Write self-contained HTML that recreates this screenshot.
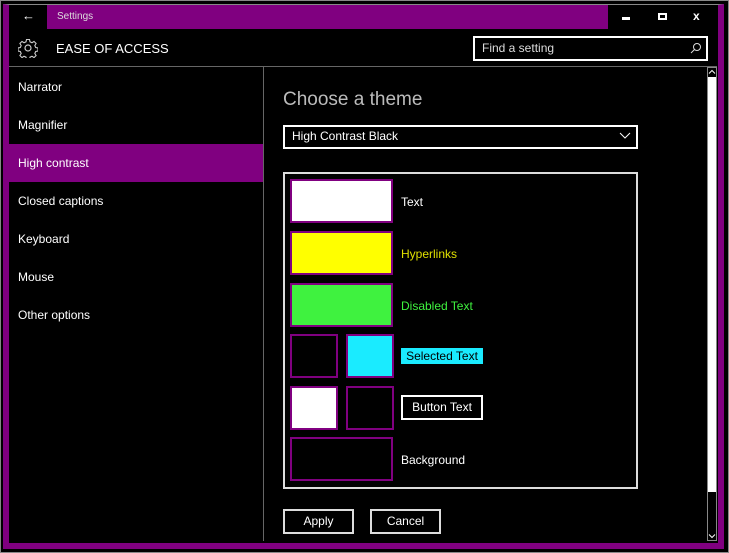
<!DOCTYPE html><html><head><style>
*{margin:0;padding:0;box-sizing:border-box}
body{width:729px;height:553px;background:#000;position:relative;overflow:hidden;font-family:"Liberation Sans",sans-serif;color:#fff;font-size:12px}
.a{position:absolute}
.sw{position:absolute;border:2px solid #800080;left:290px;width:103px;height:44px}
.lbl{position:absolute;left:401px;font-size:12px}
.nav{position:absolute;left:18px;font-size:12px}
</style></head><body>
<div class="a" style="left:0;top:0;width:729px;height:553px;border:1px solid #888"></div>
<div class="a" style="left:3px;top:4px;width:721px;height:545px;border:6px solid #800080;border-top:1px solid #888"></div>
<div class="a" style="left:47px;top:5px;width:561px;height:24px;background:#800080"></div>
<div class="a" style="left:57px;top:11px;font-size:10px;color:#ddd">Settings</div>
<div class="a" style="left:22px;top:8px;font-size:13px">&#8592;</div>
<div class="a" style="left:622px;top:17px;width:8px;height:3px;background:#fff"></div>
<div class="a" style="left:658px;top:13px;width:9px;height:7px;border:2px solid #fff"></div>
<div class="a" style="left:693px;top:9px;font-size:12px;font-weight:bold">x</div>
<svg class="a" style="left:18px;top:38px" width="20" height="20" viewBox="0 0 20 20"><circle cx="10" cy="10" r="3" fill="none" stroke="#ccc" stroke-width="1.2"/><path d="M8.5 1.5h3l.5 2.3 2 .9 2-1.3 2.1 2.1-1.3 2 .9 2 2.3.5v3l-2.3.5-.9 2 1.3 2-2.1 2.1-2-1.3-2 .9-.5 2.3h-3l-.5-2.3-2-.9-2 1.3-2.1-2.1 1.3-2-.9-2-2.3-.5v-3l2.3-.5.9-2-1.3-2 2.1-2.1 2 1.3 2-.9z" fill="none" stroke="#ccc" stroke-width="1.1"/></svg>
<div class="a" style="left:56px;top:41px;font-size:13px">EASE OF ACCESS</div>
<div class="a" style="left:473px;top:36px;width:235px;height:25px;border:2px solid #fff"></div>
<div class="a" style="left:482px;top:41px;font-size:12px;color:#ddd">Find a setting</div>
<svg class="a" style="left:690px;top:42px" width="12" height="12"><circle cx="7" cy="5" r="3.5" stroke="#ddd" fill="none"/><path d="M4.5 7.5 1 11" stroke="#ddd"/></svg>
<div class="a" style="left:9px;top:66px;width:708px;height:1px;background:#666"></div>
<div class="a" style="left:263px;top:67px;width:1px;height:474px;background:#666"></div>
<div class="a" style="left:9px;top:144px;width:254px;height:38px;background:#800080"></div>
<div class="nav" style="top:80px">Narrator</div>
<div class="nav" style="top:118px">Magnifier</div>
<div class="nav" style="top:156px">High contrast</div>
<div class="nav" style="top:194px">Closed captions</div>
<div class="nav" style="top:232px">Keyboard</div>
<div class="nav" style="top:270px">Mouse</div>
<div class="nav" style="top:308px">Other options</div>
<div class="a" style="left:707px;top:67px;width:10px;height:474px;background:#000;border:1px solid #888"></div>
<div class="a" style="left:708px;top:77px;width:8px;height:415px;background:#fff"></div>
<svg class="a" style="left:708px;top:69px" width="8" height="6"><path d="M1 4.5 4 1.5 7 4.5" stroke="#fff" fill="none"/></svg>
<svg class="a" style="left:708px;top:533px" width="8" height="6"><path d="M1 1.5 4 4.5 7 1.5" stroke="#fff" fill="none"/></svg>
<div class="a" style="left:283px;top:89px;font-size:19px;color:#bbb">Choose a theme</div>
<div class="a" style="left:283px;top:125px;width:355px;height:24px;border:2px solid #fff"></div>
<div class="a" style="left:292px;top:129px;font-size:12px">High Contrast Black</div>
<svg class="a" style="left:619px;top:132px" width="12" height="8"><path d="M1 1l5 5 5-5" stroke="#fff" fill="none"/></svg>
<div class="a" style="left:283px;top:172px;width:355px;height:317px;border:2px solid #ddd"></div>
<div class="sw" style="top:179px;background:#fff"></div><div class="lbl" style="top:195px">Text</div>
<div class="sw" style="top:231px;background:#ff0"></div><div class="lbl" style="top:247px;color:#e0e000">Hyperlinks</div>
<div class="sw" style="top:283px;background:#3ff23f"></div><div class="lbl" style="top:299px;color:#3ff23f">Disabled Text</div>
<div class="sw" style="top:334px;width:48px"></div><div class="sw" style="top:334px;left:346px;width:48px;background:#1aebff"></div>
<div class="a" style="left:401px;top:348px;width:82px;height:16px;background:#1aebff;color:#000;font-size:12px;text-align:center;line-height:16px">Selected Text</div>
<div class="sw" style="top:386px;width:48px;background:#fff"></div><div class="sw" style="top:386px;left:346px;width:48px"></div>
<div class="a" style="left:401px;top:395px;width:82px;height:25px;border:2px solid #fff;font-size:12px;text-align:center;line-height:21px">Button Text</div>
<div class="sw" style="top:437px"></div><div class="lbl" style="top:453px">Background</div>
<div class="a" style="left:283px;top:509px;width:71px;height:25px;border:2px solid #ddd;text-align:center;line-height:21px">Apply</div>
<div class="a" style="left:370px;top:509px;width:71px;height:25px;border:2px solid #ddd;text-align:center;line-height:21px">Cancel</div>
</body></html>
